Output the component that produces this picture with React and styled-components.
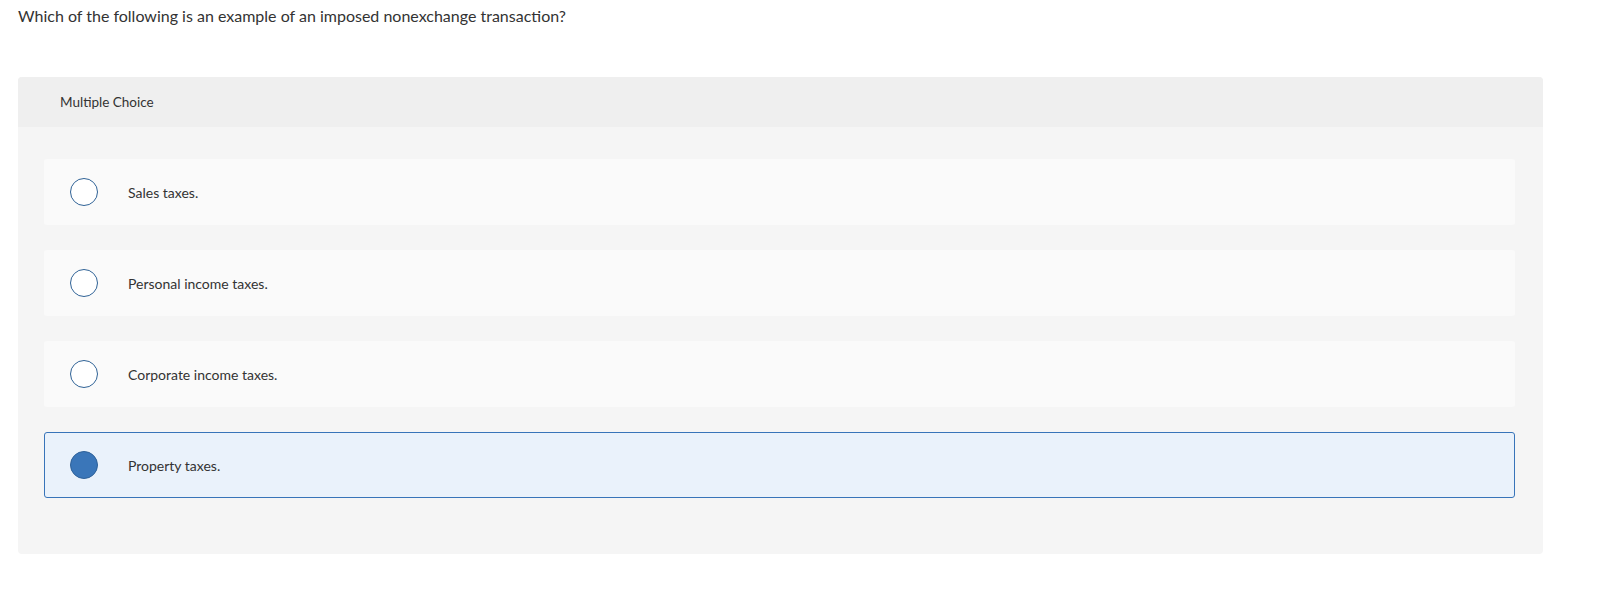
import styled, { createGlobalStyle } from 'styled-components';

const GlobalStyle = createGlobalStyle`
  html, body {
    margin: 0;
    padding: 0;
    background: #fff;
  }
  body {
    font-family: Lato, "Open Sans", Arial, sans-serif;
    color: #333;
  }
`;

const Page = styled.div`
  padding: 6px 64px 36px 18px;
`;

const Prompt = styled.p`
  margin: 0 0 51px;
  font-size: 16px;
  line-height: 20px;
  color: #333;
`;

const Panel = styled.section`
  background: #f5f5f5;
  border-radius: 4px;
  overflow: hidden;
`;

const PanelHeader = styled.header`
  height: 50px;
  display: flex;
  align-items: center;
  padding-left: 42px;
  background: #efefef;
  font-size: 13.5px;
  color: #333;
`;

const OptionList = styled.ul`
  list-style: none;
  margin: 0;
  padding: 32px 28px 56px 26px;
  display: flex;
  flex-direction: column;
  gap: 25px;
`;

const Option = styled.li`
  height: 66px;
  box-sizing: border-box;
  display: flex;
  align-items: center;
  padding-left: 25px;
  border-radius: 3px;
  background: ${({ selected }) => (selected ? '#eaf2fb' : '#fafafa')};
  border: 1px solid ${({ selected }) => (selected ? '#3874b9' : 'transparent')};
  cursor: pointer;
`;

const Radio = styled.span`
  width: 28px;
  height: 28px;
  box-sizing: border-box;
  border-radius: 50%;
  flex-shrink: 0;
  border: 1.5px solid ${({ checked }) => (checked ? '#2e6199' : '#2f6296')};
  background: ${({ checked }) => (checked ? '#3a76b9' : '#fff')};
  margin-right: 30px;
`;

const Label = styled.span`
  font-size: 14px;
  color: #333;
`;

const options = [
  'Sales taxes.',
  'Personal income taxes.',
  'Corporate income taxes.',
  'Property taxes.',
];

export default function App() {
  const selected = 3;

  return (
    <Page>
      <GlobalStyle />
      <Prompt>Which of the following is an example of an imposed nonexchange transaction?</Prompt>
      <Panel>
        <PanelHeader>Multiple Choice</PanelHeader>
        <OptionList>
          {options.map((text, i) => (
            <Option key={text} selected={i === selected}>
              <Radio checked={i === selected} />
              <Label>{text}</Label>
            </Option>
          ))}
        </OptionList>
      </Panel>
    </Page>
  );
}
